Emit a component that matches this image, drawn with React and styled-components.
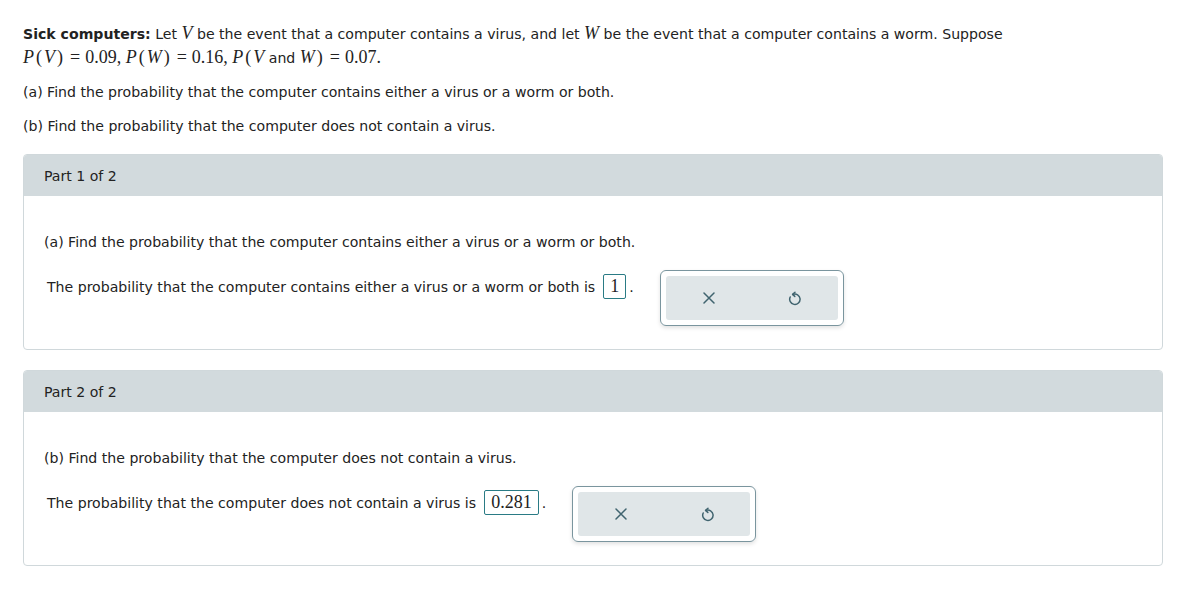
import React from 'react';
import styled, {createGlobalStyle} from 'styled-components';

const colors = {
    text: '#222',
    header: '#d2dadd',
    border: '#d0d8db',
    teal: '#2a7b85',
    toolBorder: '#7a959e',
    toolBg: '#e0e6e8',
    icon: '#40646f'
};

const GlobalStyle = createGlobalStyle`
    body {
        margin: 0;
        background: #fff;
        font-family: "DejaVu Sans", Verdana, sans-serif;
        color: ${colors.text};
    }
`;

const Page = styled.div`
    padding: 22px 25px 0 23px;
    font-size: 14.1px;
`;

const Line = styled.p`
    margin: 0;
    line-height: 23px;
`;

const Para = styled.p`
    margin: ${({top}) => top || 0}px 0 0;
    line-height: 20px;
`;

const Math = styled.span`
    font-family: "Liberation Serif", "Times New Roman", serif;
    font-size: 18px;
    font-style: ${({italic}) => italic ? 'italic' : 'normal'};
`;

const Paren = styled.span`
    margin: 0 2px;
`;

const Eq = styled.span`
    margin: 0 5px;
`;

const Panel = styled.section`
    margin-top: ${({top}) => top}px;
    border: 1px solid ${colors.border};
    border-radius: 4px;
    overflow: hidden;
`;

const PanelHeader = styled.div`
    background: ${colors.header};
    height: 41px;
    display: flex;
    align-items: center;
    padding-left: 20px;
`;

const PanelBody = styled.div`
    padding: 36px 20px 23px 20px;
`;

const AnswerRow = styled.div`
    display: flex;
    align-items: flex-start;
    margin-top: 18px;
    padding-left: 3px;
`;

const AnswerText = styled.div`
    display: flex;
    align-items: center;
    height: 25px;
    margin-top: 4px;
`;

const AnswerBox = styled.span`
    display: inline-flex;
    align-items: center;
    justify-content: center;
    margin-left: 8px;
    height: 25px;
    padding: 0 6px;
    border: 1px solid ${colors.teal};
    border-radius: 2px;
    font-family: "Liberation Serif", "Times New Roman", serif;
    font-size: 18px;
    box-sizing: border-box;
`;

const Dot = styled.span`
    margin-left: 3px;
`;

const Tools = styled.div`
    margin-left: 26px;
    width: 184px;
    height: 56px;
    box-sizing: border-box;
    border: 1px solid ${colors.toolBorder};
    border-radius: 6px;
    padding: 5px;
    box-shadow: 0 2px 4px rgba(0, 0, 0, 0.12);
`;

const ToolInner = styled.div`
    height: 100%;
    background: ${colors.toolBg};
    border-radius: 3px;
    display: grid;
    grid-template-columns: 1fr 1fr;
    align-items: center;
    justify-items: center;
`;

const ToolButton = styled.span`
    display: flex;
`;

const CloseIcon = () => (
    <svg width="12" height="12" viewBox="0 0 12 12">
        <path d="M1 1 L11 11 M11 1 L1 11" stroke={colors.icon} strokeWidth="1.5" strokeLinecap="round" />
    </svg>
);

const UndoIcon = () => (
    <svg width="13" height="15" viewBox="0 0 13 15">
        <path
            d="M5 3.4 A5.2 5.2 0 1 1 2.2 6"
            fill="none"
            stroke={colors.icon}
            strokeWidth="1.5"
            strokeLinecap="round"
        />
        <path
            d="M7 1.2 L4.6 3.4 L6.8 5.4"
            fill="none"
            stroke={colors.icon}
            strokeWidth="1.5"
            strokeLinecap="round"
            strokeLinejoin="round"
        />
    </svg>
);

const parts = [
    {
        title: 'Part 1 of 2',
        question: '(a) Find the probability that the computer contains either a virus or a worm or both.',
        answerText: 'The probability that the computer contains either a virus or a worm or both is',
        answer: '1',
        top: 18
    },
    {
        title: 'Part 2 of 2',
        question: '(b) Find the probability that the computer does not contain a virus.',
        answerText: 'The probability that the computer does not contain a virus is',
        answer: '0.281',
        top: 20
    }
];

const P = ({children}) => (
    <>
        <i>P</i><Paren>(</Paren><i>{children}</i>
    </>
);

export default function App() {
    return (
        <Page>
            <GlobalStyle />
            <Line>
                <b>Sick computers:</b> Let <Math italic>V</Math> be the event that a computer contains a virus, and let <Math italic>W</Math> be the event that a computer contains a worm. Suppose
            </Line>
            <Line>
                <Math><P>V</P><Paren>)</Paren><Eq>=</Eq>0.09, <P>W</P><Paren>)</Paren><Eq>=</Eq>0.16, <P>V</P></Math> and <Math><i>W</i><Paren>)</Paren><Eq>=</Eq>0.07.</Math>
            </Line>
            <Para top={12}>(a) Find the probability that the computer contains either a virus or a worm or both.</Para>
            <Para top={14}>(b) Find the probability that the computer does not contain a virus.</Para>

            {parts.map(part => (
                <Panel key={part.title} top={part.top}>
                    <PanelHeader>{part.title}</PanelHeader>
                    <PanelBody>
                        <Para>{part.question}</Para>
                        <AnswerRow>
                            <AnswerText>
                                {part.answerText}
                                <AnswerBox>{part.answer}</AnswerBox>
                                <Dot>.</Dot>
                            </AnswerText>
                            <Tools>
                                <ToolInner>
                                    <ToolButton><CloseIcon /></ToolButton>
                                    <ToolButton><UndoIcon /></ToolButton>
                                </ToolInner>
                            </Tools>
                        </AnswerRow>
                    </PanelBody>
                </Panel>
            ))}
        </Page>
    );
}
